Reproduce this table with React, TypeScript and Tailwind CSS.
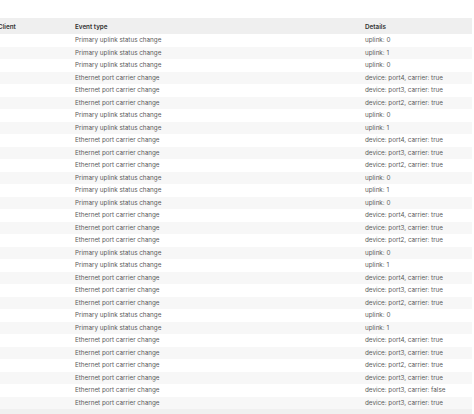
import React from 'react';

type Row = { event: string; details: string };

const P = 'Primary uplink status change';
const E = 'Ethernet port carrier change';

const rows: Row[] = [
  { event: P, details: 'uplink: 0' },
  { event: P, details: 'uplink: 1' },
  { event: P, details: 'uplink: 0' },
  { event: E, details: 'device: port4, carrier: true' },
  { event: E, details: 'device: port3, carrier: true' },
  { event: E, details: 'device: port2, carrier: true' },
  { event: P, details: 'uplink: 0' },
  { event: P, details: 'uplink: 1' },
  { event: E, details: 'device: port4, carrier: true' },
  { event: E, details: 'device: port3, carrier: true' },
  { event: E, details: 'device: port2, carrier: true' },
  { event: P, details: 'uplink: 0' },
  { event: P, details: 'uplink: 1' },
  { event: P, details: 'uplink: 0' },
  { event: E, details: 'device: port4, carrier: true' },
  { event: E, details: 'device: port3, carrier: true' },
  { event: E, details: 'device: port2, carrier: true' },
  { event: P, details: 'uplink: 0' },
  { event: P, details: 'uplink: 1' },
  { event: E, details: 'device: port4, carrier: true' },
  { event: E, details: 'device: port3, carrier: true' },
  { event: E, details: 'device: port2, carrier: true' },
  { event: P, details: 'uplink: 0' },
  { event: P, details: 'uplink: 1' },
  { event: E, details: 'device: port4, carrier: true' },
  { event: E, details: 'device: port3, carrier: true' },
  { event: E, details: 'device: port2, carrier: true' },
  { event: E, details: 'device: port3, carrier: true' },
  { event: E, details: 'device: port3, carrier: false' },
  { event: E, details: 'device: port3, carrier: true' },
];

const App: React.FC = () => {
  return (
    <div className="h-[414px] w-[474px] overflow-hidden bg-white pt-[18px] font-['Inter',sans-serif] text-[6.3px]">
      <div className="ml-[-2px] w-[474px]">
        {/* Header */}
        <div className="grid h-[16px] grid-cols-[77px_290px_1fr] items-center bg-[#efefef] pt-[3px] font-semibold text-[#333]">
          <div>Client</div>
          <div>Event type</div>
          <div>Details</div>
        </div>

        {/* Rows */}
        {rows.map((r, i) => (
          <div
            key={i}
            className={`grid h-[12.5px] grid-cols-[77px_290px_1fr] items-center pt-[1px] text-[#5a5a5a] ${
              i % 2 === 1 ? 'bg-[#f7f7f7]' : 'bg-white'
            }`}
          >
            <div></div>
            <div>{r.event}</div>
            <div>{r.details}</div>
          </div>
        ))}

        <div className="h-[6px] bg-[#f0f0f0]"></div>
      </div>
    </div>
  );
};

export default App;
